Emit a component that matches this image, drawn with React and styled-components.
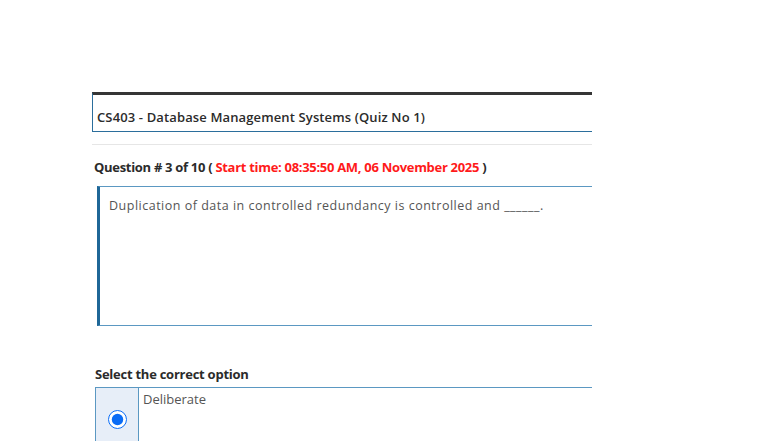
import React from "react";
import styled, { createGlobalStyle } from "styled-components";

const GlobalStyle = createGlobalStyle`
  body {
    margin: 0;
    background: #ffffff;
    font-family: "Open Sans", "DejaVu Sans", sans-serif;
  }
`;

function App() {
  const options = ["Deliberate"];

  return (
    <>
      <GlobalStyle />
      <Page>
        <QuizPanel>
          <CourseHeader>
            <CourseTitle>CS403 - Database Management Systems (Quiz No 1)</CourseTitle>
          </CourseHeader>
          <Divider />
          <QuestionHead>
            Question # 3 of 10 ( <StartTime>Start time: 08:35:50 AM, 06 November 2025</StartTime> )
          </QuestionHead>
          <QuestionBox>
            <QuestionText>
              Duplication of data in controlled redundancy is controlled and ______.
            </QuestionText>
          </QuestionBox>
          <OptionLabel>Select the correct option</OptionLabel>
          <OptionTable>
            {options.map((opt, idx) => (
              <OptionRow key={opt}>
                <RadioCell>
                  <Radio type="radio" name="answer" defaultChecked={idx === 0} />
                </RadioCell>
                <OptionText>{opt}</OptionText>
              </OptionRow>
            ))}
          </OptionTable>
        </QuizPanel>
      </Page>
    </>
  );
}

export default App;

const Page = styled.div`
  padding: 92px 0 0 92px;
  height: 441px;
  box-sizing: border-box;
  overflow: hidden;
`;

const QuizPanel = styled.div`
  width: 500px;
  overflow: hidden;
`;

const CourseHeader = styled.div`
  width: 640px;
  height: 40px;
  border-top: 3px solid #353535;
  border-left: 1px solid #2b6e9c;
  border-bottom: 1px solid #2b6e9c;
  display: flex;
  align-items: center;
  padding: 7px 0 0 4px;
  box-sizing: border-box;
`;

const CourseTitle = styled.p`
  margin: 0;
  font-size: 13px;
  font-weight: 600;
  letter-spacing: 0.13px;
  color: #2b2b2b;
`;

const Divider = styled.div`
  margin-top: 12px;
  height: 1px;
  background-color: #e6e6e6;
`;

const QuestionHead = styled.p`
  margin: 13px 0 0 2px;
  font-size: 13px;
  font-weight: 700;
  letter-spacing: -0.3px;
  color: #2b2b2b;
  line-height: 18px;
`;

const StartTime = styled.span`
  color: #ff1a1a;
`;

const QuestionBox = styled.div`
  margin: 10px 0 0 5px;
  width: 640px;
  height: 140px;
  box-sizing: border-box;
  border-left: 3px solid #1f6797;
  border-top: 1px solid #5b98c2;
  border-bottom: 1px solid #5b98c2;
  padding: 10px 0 0 9px;
`;

const QuestionText = styled.p`
  margin: 0;
  font-size: 12.5px;
  letter-spacing: 0.5px;
  color: #555555;
  line-height: 18px;
`;

const OptionLabel = styled.p`
  margin: 39px 0 0 3px;
  font-size: 13px;
  font-weight: 700;
  letter-spacing: -0.25px;
  color: #2b2b2b;
  line-height: 18px;
`;

const OptionTable = styled.div`
  margin: 4px 0 0 3px;
  width: 640px;
  border-top: 1px solid #5b98c2;
`;

const OptionRow = styled.div`
  display: flex;
  height: 60px;
`;

const RadioCell = styled.div`
  width: 44px;
  background-color: #e7eef8;
  border-left: 1px solid #5b98c2;
  border-right: 1px solid #5b98c2;
  display: flex;
  justify-content: center;
  padding-top: 22px;
  box-sizing: border-box;
`;

const Radio = styled.input`
  margin: 0;
  width: 19px;
  height: 19px;
  accent-color: #0a6cf5;
`;

const OptionText = styled.p`
  margin: 0;
  padding: 2px 0 0 4px;
  font-size: 13px;
  color: #555555;
  line-height: 18px;
`;
